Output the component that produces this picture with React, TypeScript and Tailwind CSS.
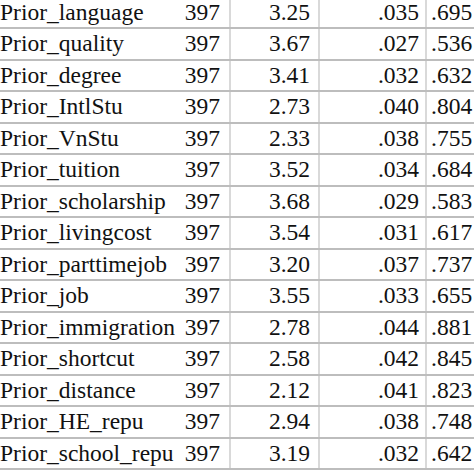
const rows = [
  { name: 'Prior_language', n: '397', mean: '3.25', se: '.035', sd: '.695' },
  { name: 'Prior_quality', n: '397', mean: '3.67', se: '.027', sd: '.536' },
  { name: 'Prior_degree', n: '397', mean: '3.41', se: '.032', sd: '.632' },
  { name: 'Prior_IntlStu', n: '397', mean: '2.73', se: '.040', sd: '.804' },
  { name: 'Prior_VnStu', n: '397', mean: '2.33', se: '.038', sd: '.755' },
  { name: 'Prior_tuition', n: '397', mean: '3.52', se: '.034', sd: '.684' },
  { name: 'Prior_scholarship', n: '397', mean: '3.68', se: '.029', sd: '.583' },
  { name: 'Prior_livingcost', n: '397', mean: '3.54', se: '.031', sd: '.617' },
  { name: 'Prior_parttimejob', n: '397', mean: '3.20', se: '.037', sd: '.737' },
  { name: 'Prior_job', n: '397', mean: '3.55', se: '.033', sd: '.655' },
  { name: 'Prior_immigration', n: '397', mean: '2.78', se: '.044', sd: '.881' },
  { name: 'Prior_shortcut', n: '397', mean: '2.58', se: '.042', sd: '.845' },
  { name: 'Prior_distance', n: '397', mean: '2.12', se: '.041', sd: '.823' },
  { name: 'Prior_HE_repu', n: '397', mean: '2.94', se: '.038', sd: '.748' },
  { name: 'Prior_school_repu', n: '397', mean: '3.19', se: '.032', sd: '.642' },
];

export default function App() {
  return (
    <div className="w-[474px] h-[474px] overflow-hidden bg-white font-['Liberation_Serif',serif] text-[#111]">
      <div className="-mt-[2.5px] text-[23.5px]">
        {rows.map((r) => (
          <div key={r.name} className="flex h-[31.5px] border-b-2 border-[#bdbdbd]">
            <div className="w-[231px] shrink-0 flex items-center justify-between pr-[9px] border-r-2 border-[#d9d9d9]">
              <span>{r.name}</span>
              <span>{r.n}</span>
            </div>
            <div className="w-[89px] shrink-0 flex items-center justify-end pr-[8px] border-r-2 border-[#d9d9d9]">
              {r.mean}
            </div>
            <div className="w-[107px] shrink-0 flex items-center justify-end pr-[6px] border-r-2 border-[#d9d9d9]">
              {r.se}
            </div>
            <div className="flex-1 flex items-center pl-[4px] whitespace-nowrap">{r.sd}</div>
          </div>
        ))}
      </div>
    </div>
  );
}
